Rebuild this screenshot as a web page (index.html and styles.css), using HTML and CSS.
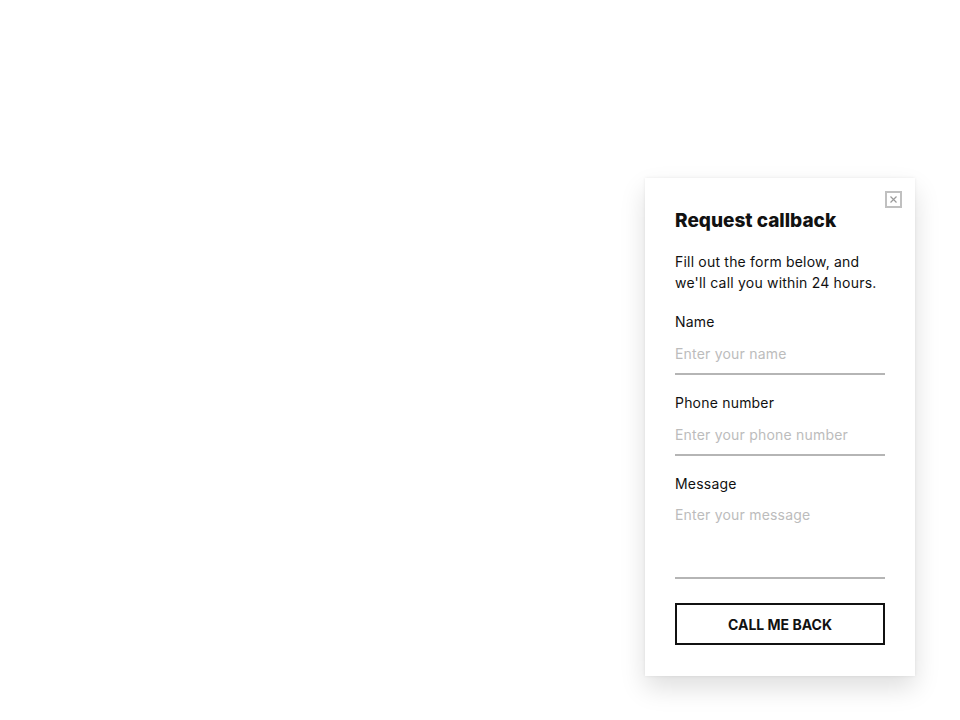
FILE: index.html
```html
<!DOCTYPE html>
<html lang="en">
<head>
<meta charset="utf-8">
<title>Request callback</title>
<link rel="stylesheet" href="styles.css">
</head>
<body>
<div class="stage">
  <form class="panel" onsubmit="return false">
    <button type="button" class="close" aria-label="Close">
      <svg width="9" height="9" viewBox="0 0 9 9"><path d="M1.5 1.5L7.5 7.5M7.5 1.5L1.5 7.5" stroke="#9a9a9a" stroke-width="1.2"/></svg>
    </button>
    <h2 class="title">Request callback</h2>
    <p class="intro">Fill out the form below, and we'll call you within 24 hours.</p>
    <label class="field">
      <span class="label">Name</span>
      <input class="input" type="text" placeholder="Enter your name">
    </label>
    <label class="field">
      <span class="label">Phone number</span>
      <input class="input" type="text" placeholder="Enter your phone number">
    </label>
    <label class="field">
      <span class="label">Message</span>
      <textarea class="input area" placeholder="Enter your message"></textarea>
    </label>
    <button type="submit" class="submit">CALL ME BACK</button>
  </form>
</div>
</body>
</html>
```
FILE: styles.css
```css
html, body {
  margin: 0;
  padding: 0;
  background: #ffffff;
}
body {
  font-family: "Inter", "Noto Sans", sans-serif;
  color: #111111;
}
.stage {
  display: flex;
  justify-content: flex-end;
  align-items: flex-start;
  padding: 178px 45px 0 0;
  height: 720px;
  box-sizing: border-box;
}
.panel {
  position: relative;
  width: 270px;
  box-sizing: border-box;
  padding: 30px 30px 31px;
  background: #ffffff;
  box-shadow: 0 12px 24px rgba(0, 0, 0, 0.13), 0 0 3px rgba(0, 0, 0, 0.08);
  display: flex;
  flex-direction: column;
}
.close {
  position: absolute;
  top: 13px;
  right: 13px;
  width: 17px;
  height: 17px;
  padding: 0;
  border: 2px solid #c0c0c0;
  background: #fff;
  display: flex;
  align-items: center;
  justify-content: center;
  box-sizing: border-box;
}
.title {
  margin: 1px 0 0;
  font-size: 19px;
  line-height: 24px;
  font-weight: 800;
  letter-spacing: 0;
}
.intro {
  margin: 18px 0 0;
  font-size: 14px;
  line-height: 21px;
  letter-spacing: 0.2px;
}
.field {
  display: flex;
  flex-direction: column;
  margin-top: 18px;
}
.intro + .field {
  margin-top: 19px;
}
.label {
  font-size: 14px;
  line-height: 20px;
  margin-bottom: 2px;
  letter-spacing: 0.2px;
}
.input {
  font-family: inherit;
  font-size: 14px;
  letter-spacing: 0.2px;
  color: #111;
  border: none;
  border-bottom: 2px solid #b5b5b5;
  outline: none;
  padding: 0;
  height: 41px;
  box-sizing: border-box;
  background: transparent;
}
.input::placeholder {
  color: #bcbcbc;
}
.area {
  height: 83px;
  padding-top: 8px;
  line-height: 21px;
  resize: none;
}
.submit {
  margin-top: 24px;
  height: 42px;
  border: 2px solid #111;
  background: #fff;
  font-family: inherit;
  font-size: 14px;
  font-weight: 700;
  color: #111;
  letter-spacing: 0;
}
```
